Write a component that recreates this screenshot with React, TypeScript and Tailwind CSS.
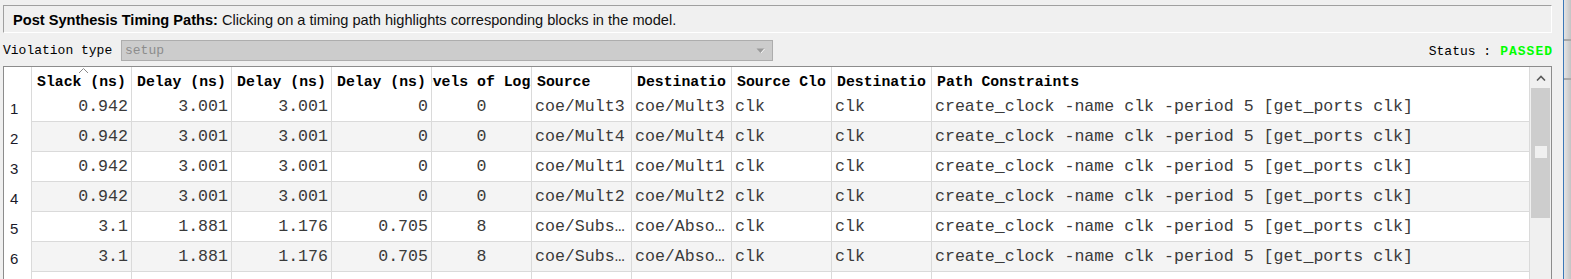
import React from "react";

type Align = "left" | "right" | "center";
const cols: { w: string; align: Align; header: string; hAlign?: "center" }[] = [
  { w: "w-[100px]", align: "right", header: "Slack (ns)" },
  { w: "w-[100px]", align: "right", header: "Delay (ns)" },
  { w: "w-[100px]", align: "right", header: "Delay (ns)" },
  { w: "w-[100px]", align: "right", header: "Delay (ns)" },
  { w: "w-[100px]", align: "center", header: "Levels of Logic", hAlign: "center" },
  { w: "w-[100px]", align: "left", header: "Source" },
  { w: "w-[100px]", align: "left", header: "Destinatio" },
  { w: "w-[100px]", align: "left", header: "Source Clo" },
  { w: "w-[100px]", align: "left", header: "Destinatio" },
  { w: "w-[598px]", align: "left", header: "Path Constraints" },
];

const pc = "create_clock -name clk -period 5 [get_ports clk]";
const rows: string[][] = [
  ["0.942", "3.001", "3.001", "0", "0", "coe/Mult3", "coe/Mult3", "clk", "clk", pc],
  ["0.942", "3.001", "3.001", "0", "0", "coe/Mult4", "coe/Mult4", "clk", "clk", pc],
  ["0.942", "3.001", "3.001", "0", "0", "coe/Mult1", "coe/Mult1", "clk", "clk", pc],
  ["0.942", "3.001", "3.001", "0", "0", "coe/Mult2", "coe/Mult2", "clk", "clk", pc],
  ["3.1", "1.881", "1.176", "0.705", "8", "coe/Subs\u2026", "coe/Abso\u2026", "clk", "clk", pc],
  ["3.1", "1.881", "1.176", "0.705", "8", "coe/Subs\u2026", "coe/Abso\u2026", "clk", "clk", pc],
  ["", "", "", "", "", "", "", "", "", ""],
];

const alignCls: Record<Align, string> = {
  left: "justify-start pl-[3px]",
  right: "justify-end pr-[3px]",
  center: "justify-center",
};

export default function App() {
  return (
    <div className="w-[1571px] h-[279px] overflow-hidden bg-[#f0f0f0] flex">
      <div className="w-[1563px] h-[279px] flex flex-col pl-[3px]">
        {/* title box */}
        <div className="mt-[5px] w-[1549px] h-[28px] shrink-0 border border-t-[#a0a0a0] border-l-[#a0a0a0] border-b-white border-r-white flex items-center pl-[9px] pt-[3px] font-['Liberation_Sans',Arial,sans-serif] text-[14.6px] text-[#111] whitespace-nowrap">
          <span className="font-bold text-black">Post Synthesis Timing Paths:</span>
          <span className="ml-[4px]">Clicking on a timing path highlights corresponding blocks in the model.</span>
        </div>

        {/* violation row */}
        <div className="mt-[7px] w-[1549px] h-[21px] shrink-0 flex items-center font-['Liberation_Mono',monospace] text-[13px]">
          <div className="w-[118px] text-black">Violation type</div>
          <div className="w-[652px] h-[21px] border border-[#adadad] bg-[#cccccc] flex items-center pl-[3px] relative">
            <span className="text-[#8c8c8c]">setup</span>
            <svg className="absolute right-[7px] top-[7px]" width="9" height="6" viewBox="0 0 9 6">
              <polygon points="0.5,0.5 8.5,0.5 4.5,5" fill="#9a9a9a" />
              <line x1="5" y1="5" x2="8.5" y2="1" stroke="#f4f4f4" strokeWidth="1" />
            </svg>
          </div>
          <div className="flex-1" />
          <div className="flex items-center pt-[2px]">
            <span className="text-black">Status :</span>
            <span className="ml-[9px] font-bold text-[#00ff00] tracking-[1px] mr-[-1px]">PASSED</span>
          </div>
        </div>

        {/* table */}
        <div className="mt-[5px] w-[1549px] flex-1 min-h-0 border-t border-l border-r border-[#8c8c8c] bg-white flex overflow-hidden">
          <div className="w-[1526px] flex flex-col">
            {/* header */}
            <div className="h-[25px] shrink-0 flex font-['Liberation_Mono',monospace] font-bold text-[14.8px] text-black">
              <div className="w-[28px] shrink-0 border-r border-[#dadada]" />
              {cols.map((c, i) => (
                <div
                  key={i}
                  className={`${c.w} shrink-0 border-r border-[#dadada] flex items-center pt-[5px] overflow-hidden whitespace-nowrap relative ${
                    c.hAlign === "center" ? "justify-center" : "justify-start pl-[5px]"
                  }`}
                >
                  <span className="shrink-0">{c.header}</span>
                  {i === 0 && (
                    <svg className="absolute left-[46px] top-[0px]" width="11" height="7" viewBox="0 0 11 7">
                      <polyline points="1,6 5.5,1.5 10,6" fill="none" stroke="#8a8a8a" strokeWidth="1" />
                    </svg>
                  )}
                </div>
              ))}
            </div>
            {/* rows */}
            {rows.map((r, ri) => (
              <div key={ri} className="h-[30px] shrink-0 flex">
                <div className="w-[28px] shrink-0 border-r border-[#dadada] bg-white flex items-center pl-[6px] pt-[4px] font-['Liberation_Sans',Arial,sans-serif] text-[15px] text-[#1a1a2a]">
                  {ri < 6 ? ri + 1 : ""}
                </div>
                {r.map((v, ci) => (
                  <div
                    key={ci}
                    className={`${cols[ci].w} shrink-0 border-r border-b border-[#dadada] flex items-center pt-[1px] whitespace-nowrap overflow-hidden font-['Liberation_Mono','Courier_New',monospace] text-[16.6px] text-[#3a3a3a] ${
                      ri % 2 === 1 ? "bg-[#f4f4f4]" : "bg-white"
                    } ${alignCls[cols[ci].align]}`}
                  >
                    {v}
                  </div>
                ))}
              </div>
            ))}
          </div>
          {/* scrollbar */}
          <div className="w-[21px] shrink-0 bg-[#f0f0f0] flex flex-col items-center">
            <div className="h-[21px] w-full flex items-start justify-center pt-[8px]">
              <svg width="10" height="6" viewBox="0 0 10 6">
                <polyline points="1,5.5 5,1.5 9,5.5" fill="none" stroke="#5a5a5a" strokeWidth="1.6" />
              </svg>
            </div>
            <div className="w-[19px] h-[130px] bg-[#cdcdcd] flex justify-center pt-[58px]">
              <div className="w-[12px] h-[12px] bg-[#f0f0f0]" />
            </div>
          </div>
        </div>
      </div>
      {/* right edge */}
      <div className="w-[1px] h-full bg-[#3b78b8]" />
      <div className="w-[7px] h-full bg-gradient-to-r from-[#e4e4e4] to-[#c4c4c4] flex flex-col">
        <div className="h-[39px]" />
        <div className="h-[2px] bg-[#a8a8a8]" />
        <div className="h-[37px]" />
        <div className="h-[2px] bg-[#a8a8a8]" />
      </div>
    </div>
  );
}
